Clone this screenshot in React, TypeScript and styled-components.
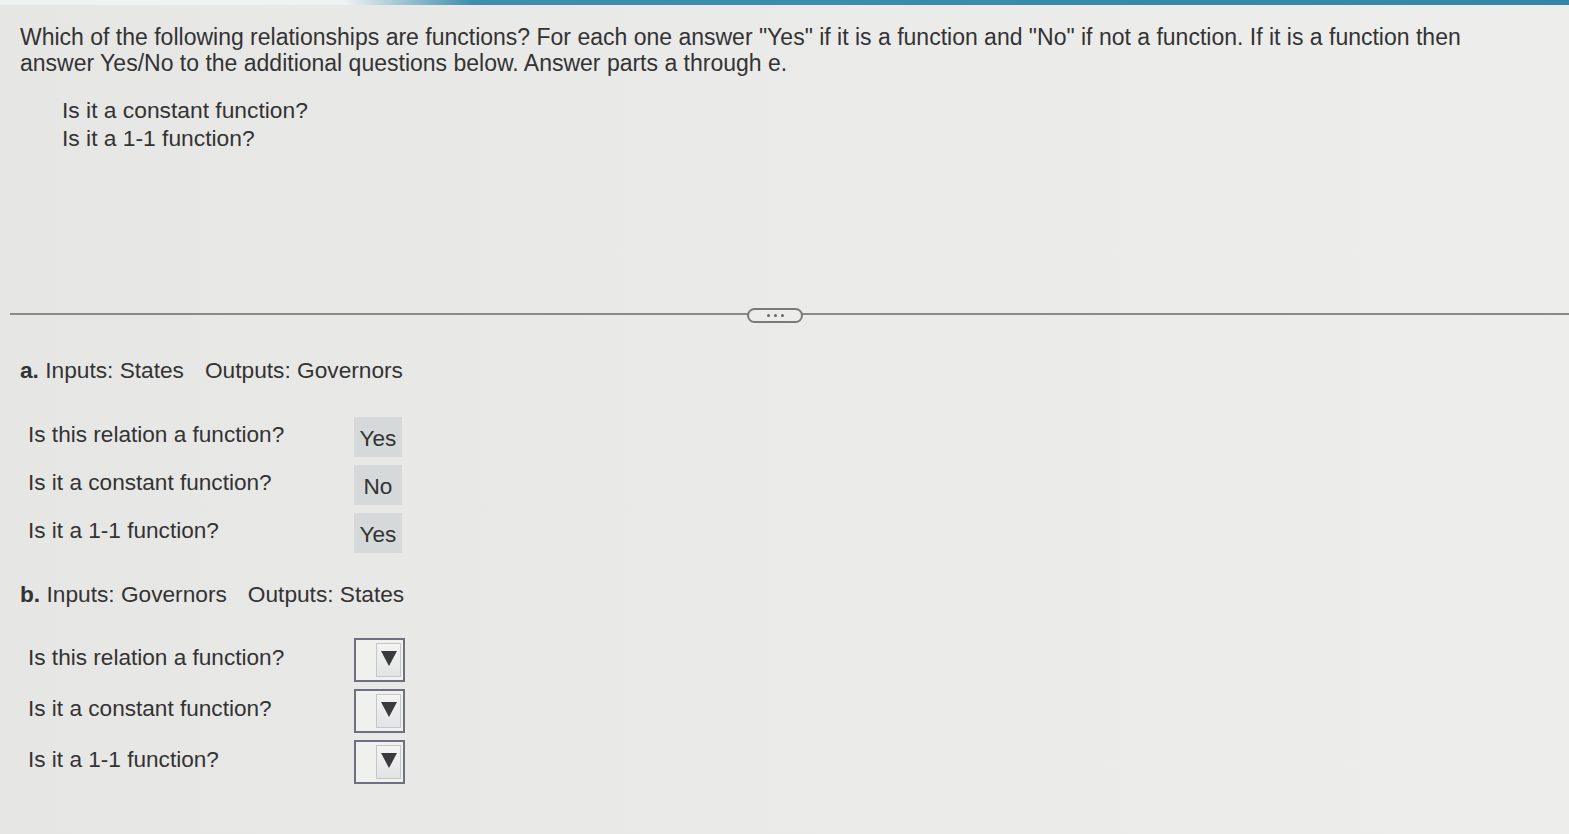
import React from "react";
import styled, { createGlobalStyle } from "styled-components";

const GlobalStyle = createGlobalStyle`
  html, body {
    margin: 0;
    padding: 0;
    background: #e9e9e8;
  }
  body {
    font-family: "Liberation Sans", Arial, sans-serif;
    color: #333;
  }
`;

const Page = styled.div`
  width: 1569px;
  height: 834px;
  overflow: hidden;
  background: linear-gradient(90deg, #e6e6e5 0%, #ebebea 60%, #ededec 100%);
`;

const TopBar = styled.div`
  height: 5px;
  background: linear-gradient(90deg, #eef2f3 0%, #eef2f3 22%, #3d8fae 30%, #2f88ab 100%);
`;

const Intro = styled.div`
  padding: 19px 20px 0 20px;
  font-size: 23px;
  line-height: 26px;
`;

const SubQuestions = styled.div`
  padding: 20px 0 0 62px;
  font-size: 22.8px;
  line-height: 28px;
`;

const Divider = styled.div`
  position: relative;
  margin: 161px 0 0 10px;
  height: 2px;
  background: #8a8a8a;
`;

const MorePill = styled.div`
  position: absolute;
  left: 737px;
  top: -5px;
  width: 52px;
  height: 11px;
  border: 2px solid #7a7a7a;
  border-radius: 8px;
  background: #ececeb;
  display: flex;
  align-items: center;
  justify-content: center;
  gap: 4px;
`;

const Dot = styled.span`
  width: 3px;
  height: 3px;
  border-radius: 50%;
  background: #666;
`;

const Section = styled.div`
  padding: 0 20px;
`;

const Heading = styled.div<{ $top: number }>`
  margin-top: ${(p) => p.$top}px;
  font-size: 22.7px;
  line-height: 26px;
  b {
    font-weight: bold;
  }
`;

const Gap = styled.span`
  display: inline-block;
  width: 21px;
`;

const Rows = styled.div<{ $top: number; $gap: number }>`
  margin-top: ${(p) => p.$top}px;
  padding-left: 8px;
  display: grid;
  grid-template-columns: 326px auto;
  row-gap: ${(p) => p.$gap}px;
  align-items: center;
  justify-content: start;
`;

const Label = styled.div`
  font-size: 22.6px;
  line-height: 26px;
  margin-top: -5px;
`;

const Answer = styled.div`
  width: 48px;
  height: 40px;
  background: #d6d9da;
  display: flex;
  align-items: center;
  justify-content: center;
  font-size: 22.6px;
  padding-top: 4px;
  box-sizing: border-box;
`;

const Select = styled.div`
  width: 51px;
  height: 44px;
  box-sizing: border-box;
  border: 2px solid #6e7080;
  background: #f0f0ef;
  display: flex;
  justify-content: flex-end;
  padding: 3px 2px 3px 0;
`;

const SelectButton = styled.div`
  width: 23px;
  border: 1px solid #c4c6c8;
  background: linear-gradient(180deg, #f4f4f4 0%, #e2e3e4 100%);
  display: flex;
  align-items: center;
  justify-content: center;
`;

const Arrow = styled.span`
  width: 0;
  height: 0;
  border-left: 8px solid transparent;
  border-right: 8px solid transparent;
  border-top: 15px solid #3a3a3c;
  margin-top: -4px;
`;

const partA = [
  { q: "Is this relation a function?", a: "Yes" },
  { q: "Is it a constant function?", a: "No" },
  { q: "Is it a 1-1 function?", a: "Yes" },
];

const partB = [
  "Is this relation a function?",
  "Is it a constant function?",
  "Is it a 1-1 function?",
];

export default function App() {
  return (
    <Page>
      <GlobalStyle />
      <TopBar />
      <Intro>
        Which of the following relationships are functions? For each one answer "Yes" if it is a
        function and "No" if not a function. If it is a function then
        <br />
        answer Yes/No to the additional questions below. Answer parts a through e.
      </Intro>
      <SubQuestions>
        Is it a constant function?
        <br />
        Is it a 1-1 function?
      </SubQuestions>
      <Divider>
        <MorePill>
          <Dot />
          <Dot />
          <Dot />
        </MorePill>
      </Divider>
      <Section>
        <Heading $top={42}>
          <b>a.</b> Inputs: States<Gap />Outputs: Governors
        </Heading>
        <Rows $top={34} $gap={8}>
          {partA.map((r) => (
            <React.Fragment key={r.q}>
              <Label>{r.q}</Label>
              <Answer>{r.a}</Answer>
            </React.Fragment>
          ))}
        </Rows>
        <Heading $top={28}>
          <b>b.</b> Inputs: Governors<Gap />Outputs: States
        </Heading>
        <Rows $top={31} $gap={7}>
          {partB.map((q) => (
            <React.Fragment key={q}>
              <Label>{q}</Label>
              <Select>
                <SelectButton>
                  <Arrow />
                </SelectButton>
              </Select>
            </React.Fragment>
          ))}
        </Rows>
      </Section>
    </Page>
  );
}
